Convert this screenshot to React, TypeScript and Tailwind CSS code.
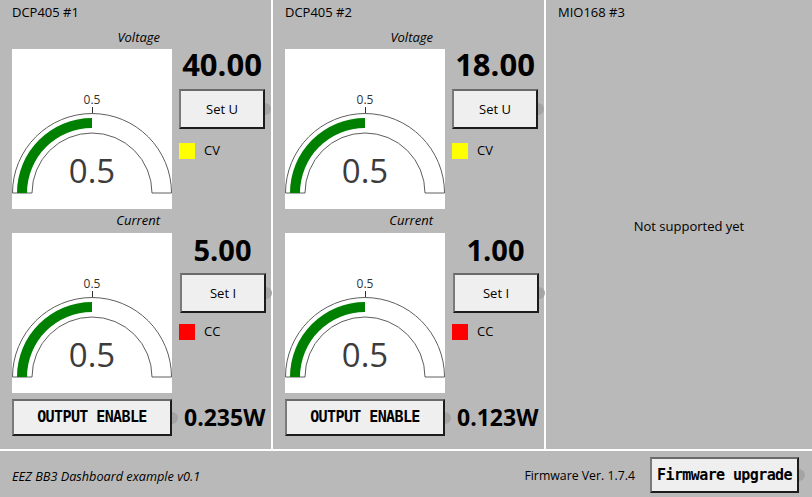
import React from "react";

const SANS = "font-['Open_Sans','Noto_Sans',sans-serif]";
const MONO = "font-['DejaVu_Sans_Mono',monospace]";

function Gauge() {
  return (
    <div className="w-[160px] h-[160px] bg-white">
      <svg width="160" height="160" viewBox="0 0 160 160" style={{ fontFamily: '"Open Sans", "Noto Sans", sans-serif' }}>
        <path
          d="M0.5,144 A79.5,79.5 0 0 1 159.5,144 L140,144 A60,60 0 0 0 20,144 Z"
          fill="white"
          stroke="#5e5e5e"
          strokeWidth="1"
        />
        <path d="M5,144 A75,75 0 0 1 80,69 L80,79 A65,65 0 0 0 15,144 Z" fill="#008000" />
        <line x1="80.5" y1="58" x2="80.5" y2="64" stroke="#333" strokeWidth="1" />
        <text x="80" y="55" textAnchor="middle" fontSize="12" fill="#333">
          0.5
        </text>
        <text x="80" y="134" textAnchor="middle" fontSize="33" fill="#3c3c3c">
          0.5
        </text>
      </svg>
    </div>
  );
}

function Knob() {
  return (
    <div className="absolute right-[-6px] top-1/2 -translate-y-1/2 w-[12px] h-[12px] rounded-full bg-[#a4a4a4]" />
  );
}

function Button({ children, className }: { children: React.ReactNode; className: string }) {
  return (
    <div className={`relative ${className}`}>
      <Knob />
      <div className="relative z-10 w-full h-full bg-[#efefef] border-2 border-t-[#6a6a6a] border-l-[#7a7a7a] border-r-[#1c1c1c] border-b-[#1c1c1c] flex items-center justify-center">
        {children}
      </div>
    </div>
  );
}

function Dcp({ title, u, i, p }: { title: string; u: string; i: string; p: string }) {
  return (
    <div className="w-[271px] h-full flex flex-col">
      <div className="h-[26px] pl-[12px] flex items-center text-[13px] text-black">{title}</div>

      <div className="flex pl-[12px]">
        <div className="w-[160px] flex flex-col">
          <div className="h-[23px] flex items-center justify-end pr-[12px] text-[13px] italic text-black">Voltage</div>
          <Gauge />
        </div>
        <div className="ml-[7px] w-[86px] flex flex-col">
          <div className="mt-[19px] h-[38px] flex items-center justify-center text-[31px] font-bold leading-none text-black">
            {u}
          </div>
          <Button className="mt-[6px] w-[86px] h-[40px]">
            <span className="text-[13px] text-black mt-[1px]">Set U</span>
          </Button>
          <div className="mt-[14px] h-[16px] flex items-center">
            <div className="w-[16px] h-[16px] bg-[#ffff00]" />
            <span className="ml-[9px] text-[13px] text-black">CV</span>
          </div>
        </div>
      </div>

      <div className="flex pl-[12px]">
        <div className="w-[160px] flex flex-col">
          <div className="h-[24px] flex items-center justify-end pr-[12px] text-[13px] italic text-black">Current</div>
          <Gauge />
        </div>
        <div className="ml-[7px] w-[87px] flex flex-col">
          <div className="mt-[22px] h-[36px] flex items-center justify-center text-[29px] font-bold leading-none text-black">
            {i}
          </div>
          <Button className="mt-[6px] w-[86px] h-[40px] ml-[1px]">
            <span className="text-[13px] text-black mt-[1px]">Set I</span>
          </Button>
          <div className="mt-[11px] h-[16px] flex items-center">
            <div className="w-[16px] h-[16px] bg-[#ff0000]" />
            <span className="ml-[9px] text-[13px] text-black">CC</span>
          </div>
        </div>
      </div>

      <div className="flex pl-[12px] mt-[6px] items-center">
        <Button className="w-[160px] h-[37px]">
          <span className={`${MONO} font-bold text-[15px] tracking-[-0.6px] text-black`}>OUTPUT ENABLE</span>
        </Button>
        <div className="ml-[12px] text-[23px] font-bold leading-none text-black">{p}</div>
      </div>
    </div>
  );
}

export default function App() {
  return (
    <div className={`${SANS} w-[812px] h-[497px] bg-[#b9b9b9] flex flex-col overflow-hidden`}>
      <div className="h-[449px] flex">
        <Dcp title="DCP405 #1" u="40.00" i="5.00" p="0.235W" />
        <div className="w-[2px] h-full bg-white" />
        <Dcp title="DCP405 #2" u="18.00" i="1.00" p="0.123W" />
        <div className="w-[2px] h-full bg-white" />
        <div className="flex-1 flex flex-col">
          <div className="h-[26px] pl-[12px] flex items-center text-[13px] text-black">MIO168 #3</div>
          <div className="flex-1 flex items-center justify-center text-[13px] text-black pl-[20px] pb-[22px]">
            Not supported yet
          </div>
        </div>
      </div>
      <div className="h-[2px] bg-white" />
      <div className="flex-1 flex items-center pl-[12px] pr-[13px]">
        <div className="mt-[5px] text-[12.7px] italic text-black">EEZ BB3 Dashboard example v0.1</div>
        <div className="flex-1" />
        <div className="mt-[5px] text-[12.3px] text-black">Firmware Ver. 1.7.4</div>
        <Button className="ml-[15px] mt-[2px] w-[149px] h-[36px]">
          <span className={`${MONO} font-bold text-[15px] tracking-[-0.6px] text-black`}>Firmware upgrade</span>
        </Button>
      </div>
    </div>
  );
}
